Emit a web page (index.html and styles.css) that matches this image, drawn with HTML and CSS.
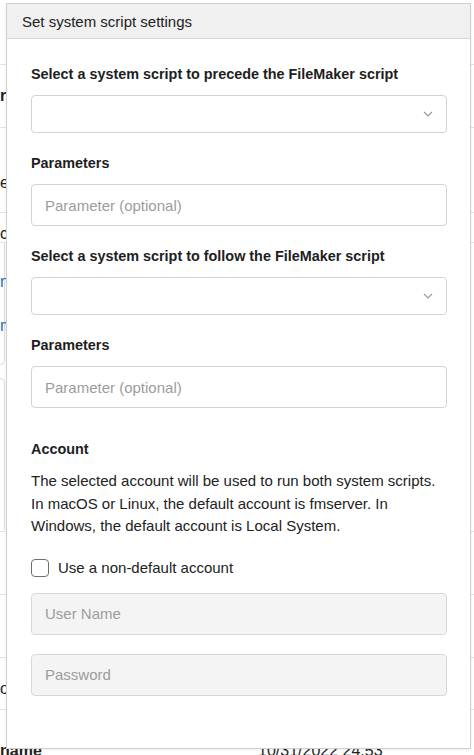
FILE: index.html
```html
<!DOCTYPE html>
<html lang="en">
<head>
    <meta charset="UTF-8">
    <meta name="viewport" content="width=device-width, initial-scale=1.0">
    <title>Set system script settings</title>
    <link rel="stylesheet" href="styles.css">
</head>
<body>
    <!-- Page behind the dialog -->
    <div class="page">
        <div class="row row-head"></div>
        <div class="row row-a"><div class="cut"><span class="strong">r</span></div></div>
        <div class="row row-b"><div class="cut"><span>e</span></div></div>
        <div class="row row-c"><div class="cut"><span>c</span></div></div>
        <div class="row row-cards">
            <div class="side">
                <div class="side-card first">
                    <div class="cut link"><span>n</span></div>
                    <div class="cut link"><span>m</span></div>
                </div>
                <div class="side-card second"></div>
            </div>
        </div>
        <div class="row row-d"></div>
        <div class="row row-d"></div>
        <div class="row row-e"><div class="cut"><span>o</span></div></div>
        <div class="row row-last">
            <div class="cut wide"><span class="strong">name</span></div>
            <div class="date">10/31/2022 24:53</div>
        </div>
    </div>

    <!-- Dialog -->
    <div class="modal">
        <div class="modal-header">Set system script settings</div>
        <div class="modal-body">
            <div class="field">
                <label class="field-label">Select a system script to precede the FileMaker script</label>
                <div class="select">
                    <svg class="chevron" width="10" height="6" viewBox="0 0 10 6"><path d="M1 1l4 4 4-4" fill="none" stroke="#9a9a9a" stroke-width="1.2"/></svg>
                </div>
            </div>
            <div class="field">
                <label class="field-label">Parameters</label>
                <input class="text-input" type="text" placeholder="Parameter (optional)">
            </div>
            <div class="field">
                <label class="field-label">Select a system script to follow the FileMaker script</label>
                <div class="select">
                    <svg class="chevron" width="10" height="6" viewBox="0 0 10 6"><path d="M1 1l4 4 4-4" fill="none" stroke="#9a9a9a" stroke-width="1.2"/></svg>
                </div>
            </div>
            <div class="field">
                <label class="field-label">Parameters</label>
                <input class="text-input" type="text" placeholder="Parameter (optional)">
            </div>

            <div class="account">
                <div class="field-label">Account</div>
                <p class="account-info">The selected account will be used to run both system scripts. In macOS or Linux, the default account is fmserver. In Windows, the default account is Local System.</p>
                <label class="check-row">
                    <span class="checkbox"></span>
                    Use a non-default account
                </label>
                <input class="text-input disabled" type="text" placeholder="User Name" disabled>
                <input class="text-input disabled" type="password" placeholder="Password" disabled>
            </div>
        </div>
    </div>
</body>
</html>
```

FILE: styles.css
```css
/* General */
body {
    margin: 0;
    height: 755px;
    overflow: hidden;
    font-family: "Liberation Sans", Arial, Helvetica, sans-serif;
    color: #222;
    background: #fff;
}

/* Page behind the dialog */
.page {
    display: flex;
    flex-direction: column;
    font-size: 16px;
}

.row {
    display: flex;
    align-items: center;
    border-bottom: 1px solid #e3e3e3;
    box-sizing: border-box;
}

.row-head { height: 65px; }
.row-a { height: 63px; }
.row-b { height: 85px; align-items: flex-end; padding-bottom: 20px; }
.row-c { height: 30px; padding-top: 12px; }
.row-cards { height: 289px; align-items: flex-start; }
.row-d { height: 63px; }
.row-e { height: 52px; padding-top: 10px; }
.row-last {
    border-bottom: none;
    padding-top: 32px;
    align-items: flex-start;
}

.cut {
    width: 8px;
    display: flex;
    white-space: nowrap;
}

.cut.wide { width: 40px; }

.strong { font-weight: bold; }

.link { color: #2a6ebb; }

.side {
    display: flex;
    flex-direction: column;
    gap: 13px;
}

.side-card {
    width: 5px;
    border: 1px solid #dcdcdc;
    border-left: none;
    box-sizing: border-box;
}

.side-card.first {
    height: 122px;
    border-top: none;
    border-radius: 0 0 6px 0;
    padding-top: 30px;
    display: flex;
    flex-direction: column;
    gap: 26px;
}

.side-card.second {
    height: 152px;
    border-bottom: none;
    border-radius: 0 6px 0 0;
}

.date {
    margin-left: 218px;
}

/* Dialog */
.modal {
    position: absolute;
    top: 3px;
    left: 6px;
    width: 465px;
    box-sizing: border-box;
    background: #fff;
    border: 1px solid #d0d0d0;
    box-shadow: 0 1px 3px rgba(0, 0, 0, 0.08);
}

.modal-header {
    height: 35px;
    box-sizing: border-box;
    padding-left: 15px;
    display: flex;
    align-items: center;
    font-size: 15px;
    color: #222;
    background: #f0f0f0;
    border-bottom: 1px solid #d6d6d6;
}

.modal-body {
    padding: 25px 23px 52px 24px;
}

.field {
    margin-bottom: 20px;
}

.field-label {
    display: block;
    font-size: 14.4px;
    font-weight: bold;
    line-height: 20px;
    margin-bottom: 11px;
    color: #1e1e1e;
}

.select {
    height: 38px;
    box-sizing: border-box;
    border: 1px solid #d3d3d3;
    border-radius: 4px;
    background: #fff;
    display: flex;
    align-items: center;
    justify-content: flex-end;
    padding-right: 13px;
}

.text-input {
    display: block;
    width: 100%;
    height: 42px;
    box-sizing: border-box;
    margin: 0;
    padding: 0 13px;
    font-family: inherit;
    font-size: 15px;
    color: #222;
    background: #fff;
    border: 1px solid #d3d3d3;
    border-radius: 4px;
    outline: none;
}

.text-input::placeholder {
    color: #9c9c9c;
}

.text-input.disabled {
    background: #f4f4f4;
    border-color: #d8d8d8;
}

.account {
    margin-top: 31px;
}

.account-info {
    margin: 0;
    font-size: 15px;
    line-height: 22.5px;
    color: #222;
}

.check-row {
    display: flex;
    align-items: center;
    gap: 9px;
    height: 18px;
    margin-top: 21px;
    margin-bottom: 16px;
    font-size: 15px;
}

.checkbox {
    width: 18px;
    height: 18px;
    box-sizing: border-box;
    border: 1.5px solid #707070;
    border-radius: 4px;
    background: #fff;
}

.account .text-input + .text-input {
    margin-top: 19px;
}
```
